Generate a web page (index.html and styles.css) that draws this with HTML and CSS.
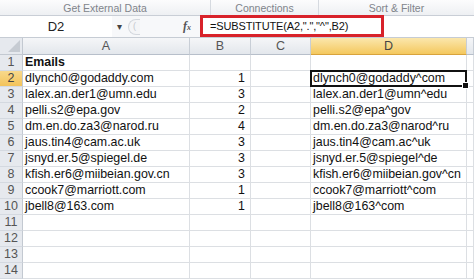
FILE: index.html
```html
<!DOCTYPE html>
<html>
<head>
<meta charset="utf-8">
<link rel="stylesheet" href="styles.css">
</head>
<body>
<div class="ribbon">
  <div class="grp g1">Get External Data</div>
  <div class="grp g2">Connections</div>
  <div class="grp g3">Sort &amp; Filter</div>
</div>
<div class="fbar">
  <div class="namebox">D2</div>
  <div class="arrow">&#9662;</div>
  <div class="pill"><span class="paren">(</span></div>
  <div class="fx">f<span class="x">x</span></div>
  <div class="finput"><div class="redbox">=SUBSTITUTE(A2,".","^",B2)</div></div>
</div>
<div class="sheet">
  <div class="corner"><svg width="12" height="12" viewBox="0 0 12 12"><polygon points="12,0 12,12 0,12" fill="#c6cbd2"/></svg></div>
  <div class="ch">A</div><div class="ch">B</div><div class="ch">C</div><div class="ch sel">D</div><div class="ch"></div>

  <div class="rh">1</div><div class="c b">Emails</div><div class="c"></div><div class="c"></div><div class="c"></div><div class="c"></div>
  <div class="rh sel">2</div><div class="c">dlynch0@godaddy.com</div><div class="c n">1</div><div class="c"></div><div class="c active">dlynch0@godaddy^com</div><div class="c"></div>
  <div class="rh">3</div><div class="c">lalex.an.der1@umn.edu</div><div class="c n">3</div><div class="c"></div><div class="c">lalex.an.der1@umn^edu</div><div class="c"></div>
  <div class="rh">4</div><div class="c">pelli.s2@epa.gov</div><div class="c n">2</div><div class="c"></div><div class="c">pelli.s2@epa^gov</div><div class="c"></div>
  <div class="rh">5</div><div class="c">dm.en.do.za3@narod.ru</div><div class="c n">4</div><div class="c"></div><div class="c">dm.en.do.za3@narod^ru</div><div class="c"></div>
  <div class="rh">6</div><div class="c">jaus.tin4@cam.ac.uk</div><div class="c n">3</div><div class="c"></div><div class="c">jaus.tin4@cam.ac^uk</div><div class="c"></div>
  <div class="rh">7</div><div class="c">jsnyd.er.5@spiegel.de</div><div class="c n">3</div><div class="c"></div><div class="c">jsnyd.er.5@spiegel^de</div><div class="c"></div>
  <div class="rh">8</div><div class="c">kfish.er6@miibeian.gov.cn</div><div class="c n">3</div><div class="c"></div><div class="c">kfish.er6@miibeian.gov^cn</div><div class="c"></div>
  <div class="rh">9</div><div class="c">ccook7@marriott.com</div><div class="c n">1</div><div class="c"></div><div class="c">ccook7@marriott^com</div><div class="c"></div>
  <div class="rh">10</div><div class="c">jbell8@163.com</div><div class="c n">1</div><div class="c"></div><div class="c">jbell8@163^com</div><div class="c"></div>
  <div class="rh">11</div><div class="c"></div><div class="c"></div><div class="c"></div><div class="c"></div><div class="c"></div>
  <div class="rh">12</div><div class="c"></div><div class="c"></div><div class="c"></div><div class="c"></div><div class="c"></div>
  <div class="rh">13</div><div class="c"></div><div class="c"></div><div class="c"></div><div class="c"></div><div class="c"></div>
  <div class="rh">14</div><div class="c"></div><div class="c"></div><div class="c"></div><div class="c"></div><div class="c"></div>
</div>
</body>
</html>
```
FILE: styles.css
```css
* { box-sizing: border-box; }
html, body { margin: 0; padding: 0; }
body {
  width: 474px;
  height: 280px;
  overflow: hidden;
  background: #fff;
  font-family: "Liberation Sans", Arial, sans-serif;
}
.ribbon {
  display: flex;
  height: 16px;
  background: linear-gradient(#fcfcfd, #eef0f3);
  border-bottom: 1px solid #c9ced6;
}
.grp {
  font-size: 10.5px;
  color: #80848b;
  text-align: center;
  line-height: 17px;
  border-right: 1px solid #d6dae0;
}
.g1 { width: 211px; }
.g2 { width: 108px; }
.g3 { flex: 1; border-right: none; }
.fbar {
  display: flex;
  align-items: center;
  height: 22px;
  background: #f7f8fa;
  border-bottom: 1px solid #c6ccd4;
}
.namebox {
  width: 112px;
  height: 100%;
  background: #fff;
  text-align: center;
  font-size: 13px;
  line-height: 21px;
  color: #222;
}
.arrow {
  width: 14px;
  font-size: 10px;
  color: #444;
  text-align: center;
}
.pill {
  width: 12px;
  height: 16px;
  margin-left: 2px;
  border: 1px solid #d4d8de;
  border-right: none;
  border-radius: 8px 0 0 8px;
  background: #f4f5f7;
  font-size: 9px;
  line-height: 13px;
  padding-left: 4px;
  color: #c4c8ce;
}
.fx {
  width: 17px;
  margin-left: 43px;
  font-family: "Liberation Serif", serif;
  font-style: italic;
  font-weight: bold;
  font-size: 12px;
  color: #555;
}
.fx .x { font-size: 8px; }
.finput {
  flex: 1;
  height: 100%;
  background: #fff;
  display: flex;
  align-items: center;
}
.redbox {
  width: 184px;
  height: 22px;
  margin-top: -2px;
  border: 3px solid #d8222a;
  padding-left: 7px;
  font-size: 11px;
  letter-spacing: -0.15px;
  line-height: 16px;
  color: #111;
  white-space: nowrap;
}
.sheet {
  display: grid;
  grid-template-columns: 23px 167px 61px 60px 156px 1fr;
  grid-template-rows: 17px repeat(14, 16px);
}
.corner {
  background: #e6e9ee;
  border-right: 1px solid #c3c9d1;
  border-bottom: 1px solid #c3c9d1;
  display: flex;
  align-items: flex-end;
  justify-content: flex-end;
  padding: 0 2px 2px 0;
}
.ch {
  background: linear-gradient(#f5f6f8, #e3e7ec);
  border-right: 1px solid #c8ced6;
  border-bottom: 1px solid #b7bfca;
  text-align: center;
  font-size: 12.5px;
  line-height: 16px;
  color: #555;
}
.ch.sel {
  background: linear-gradient(#fbe7ad, #f4c85e);
  border-bottom: 1px solid #d8a33c;
  color: #444;
}
.rh {
  background: #e6e9ee;
  border-right: 1px solid #c3c9d1;
  border-bottom: 1px solid #d4d9e0;
  text-align: center;
  font-size: 12.5px;
  line-height: 15px;
  color: #555;
}
.rh.sel {
  background: linear-gradient(#f8d98c, #f3c35a);
  color: #444;
}
.c {
  border-right: 1px solid #dcdfe3;
  border-bottom: 1px solid #dcdfe3;
  font-size: 12.4px;
  line-height: 15px;
  padding-left: 2px;
  color: #111;
  white-space: nowrap;
  overflow: visible;
}
.c.b { font-weight: bold; }
.c.n { text-align: right; padding-right: 5px; }
.c.active {
  position: relative;
  border: 2px solid #111;
  line-height: 12px;
  padding-left: 1px;
  margin: -1px 0 0 -1px;
}
.c.active::after {
  content: "";
  position: absolute;
  right: -4px;
  bottom: -4px;
  width: 5px;
  height: 5px;
  background: #111;
  border: 1px solid #fff;
}
```
